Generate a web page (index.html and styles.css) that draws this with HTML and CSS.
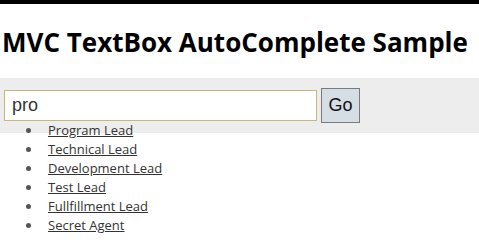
FILE: index.html
```html
<!DOCTYPE html>
<html lang="en">
<head>
    <meta charset="UTF-8">
    <meta name="viewport" content="width=device-width, initial-scale=1.0">
    <title>MVC TextBox AutoComplete Sample</title>
    <link rel="stylesheet" href="styles.css">
</head>
<body>

<div class="topbar"></div>

<main>
    <h1>MVC TextBox AutoComplete Sample</h1>

    <form class="search">
        <input class="search-box" value="pro">
        <button type="button" class="go">Go</button>
    </form>

    <ul class="suggest">
        <li><a href="#">Program Lead</a></li>
        <li><a href="#">Technical Lead</a></li>
        <li><a href="#">Development Lead</a></li>
        <li><a href="#">Test Lead</a></li>
        <li><a href="#">Fullfillment Lead</a></li>
        <li><a href="#">Secret Agent</a></li>
    </ul>
</main>

</body>
</html>
```

FILE: styles.css
```css
body {
    margin: 0;
    background: #ffffff;
    font-family: "Open Sans", "Noto Sans", sans-serif;
}
.topbar {
    height: 4px;
    background: #000000;
}
h1 {
    margin: 0;
    padding: 20px 0 0 2px;
    height: 54px;
    font-size: 26px;
    font-weight: bold;
    color: #000000;
    line-height: 36px;
}
.search {
    display: flex;
    align-items: center;
    gap: 4px;
    height: 55px;
    margin: 0;
    padding: 0 0 0 4px;
    background: #ededed;
}
.search-box {
    width: 313px;
    height: 31px;
    box-sizing: border-box;
    padding: 0 7px;
    border: 1px solid #c8b67a;
    background: #ffffff;
    font-family: "Liberation Sans", Arial, sans-serif;
    font-size: 18px;
    color: #333333;
    outline: none;
}
.go {
    width: 39px;
    height: 35px;
    padding: 0;
    border: 1px solid #7a7a7a;
    background: #d6dee5;
    font-family: "Liberation Sans", Arial, sans-serif;
    font-size: 18px;
    color: #111111;
}
.suggest {
    margin: -12px 0 0;
    padding-left: 42px;
    font-size: 13px;
    line-height: 19px;
    color: #555555;
}
.suggest li {
    padding-left: 6px;
}
.suggest a {
    color: #333333;
}
```
